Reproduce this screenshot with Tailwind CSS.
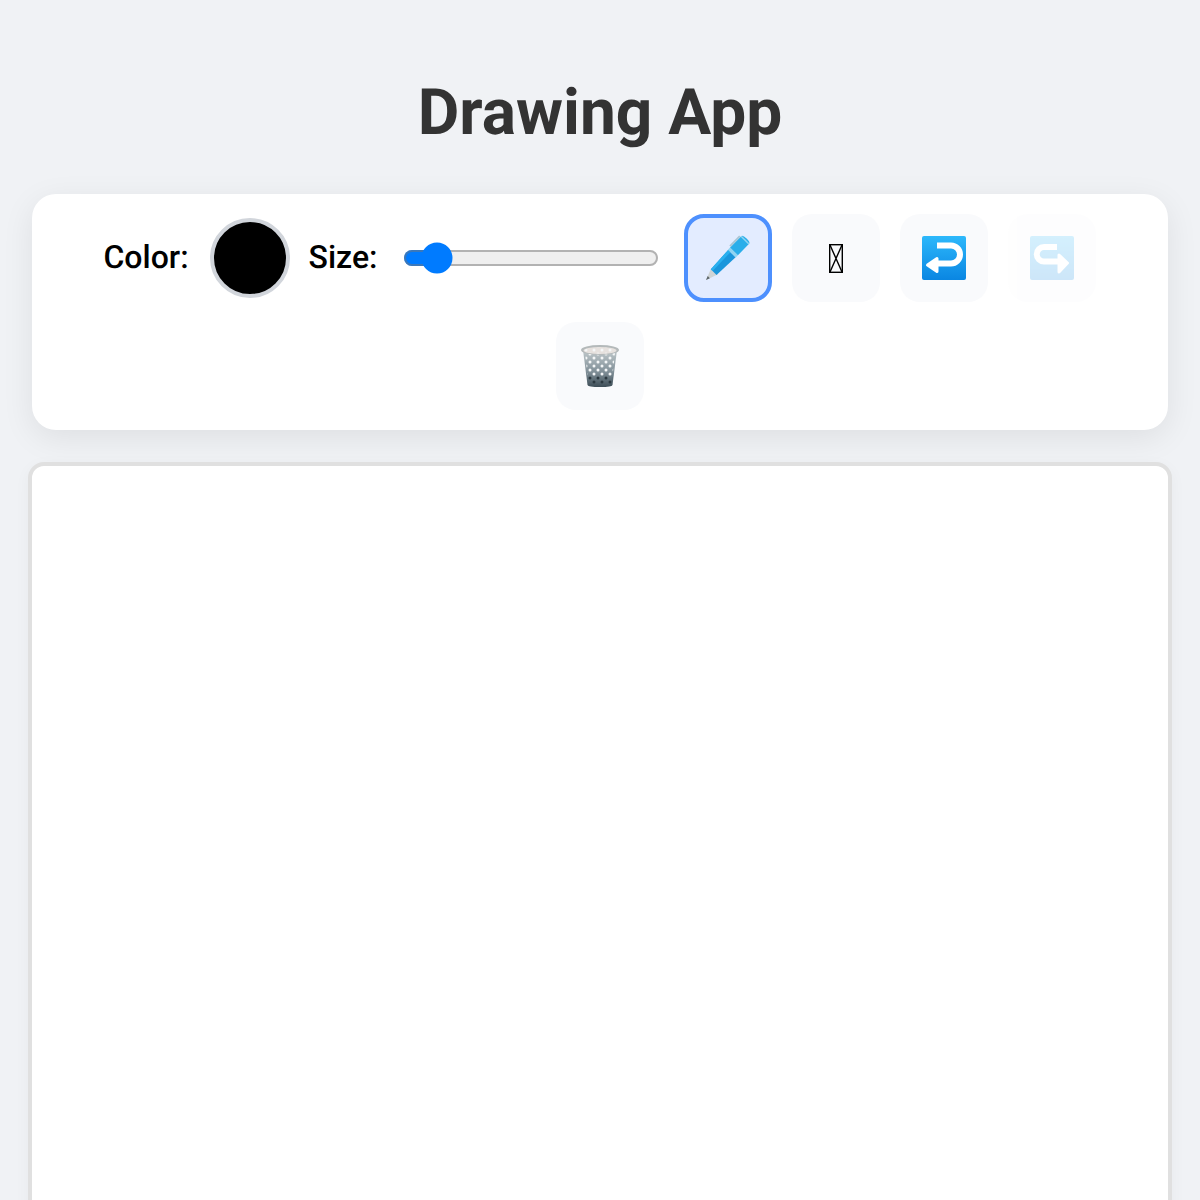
<!DOCTYPE html>
<html lang="en">
<head>
<meta charset="utf-8">
<title>Drawing App</title>
<script src="https://cdn.jsdelivr.net/npm/@tailwindcss/browser@4"></script>
</head>
<body class="bg-[#f0f2f5] font-['Roboto',sans-serif] [text-rendering:geometricPrecision]">
<div class="h-[1200px] overflow-hidden flex flex-col items-center pt-[75px] px-[32px]">
  <h1 class="text-[64px] leading-[75px] font-bold text-[#333] mb-[44px]">Drawing App</h1>
  <div class="w-[1136px] h-[236px] shrink-0 bg-white rounded-[24px] shadow-[0_8px_32px_rgba(0,0,0,0.08)] py-[20px] px-[40px] flex flex-wrap justify-center items-center content-start gap-[20px]">
    <label class="text-[32px] font-medium text-black -translate-x-px -translate-y-px">Color:</label>
    <div class="w-[80px] h-[80px] rounded-full bg-black border-[4px] border-[#d1d5db]"></div>
    <label class="text-[32px] font-medium text-black -translate-x-px -translate-y-px">Size:</label>
    <input type="range" min="1" max="50" value="5" aria-label="Size" class="[zoom:2] w-[128px] ml-[2px] mr-[2.5px] accent-[#007bff]">
    <button aria-label="Pen" class="w-[88px] h-[88px] rounded-[20px] bg-[#e3ecff] border-[4px] border-[#4d90fe] flex items-center justify-center">
      <svg width="48" height="48" viewBox="0 0 48 48">
        <g transform="translate(2 46) rotate(-45.6)">
          <path d="M0 0L12 -4.500V4.500Z" fill="#cfd4d6"/>
          <path d="M0 0L4 -1.500V1.500Z" fill="#5b6468"/>
          <path d="M11 -4L37 -5.200V5.200L11 4Z" fill="#1a96dc"/>
          <path d="M11 -4L37 -5.200V-2L11 -1.500Z" fill="#2ab0ef"/>
          <rect x="37" y="-5.500" width="3" height="11" fill="#8fd4f2"/>
          <path d="M40 -5.500H56Q58 -5.500 58 0Q58 5.500 56 5.500H40Z" fill="#2aaeea"/>
          <rect x="55" y="-5.500" width="1.500" height="11" fill="#8fd4f2"/>
          <path d="M41 -7.500H55V-5.500H41Z" fill="#a9c6d6"/>
        </g>
      </svg>
    </button>
    <button aria-label="Eraser" class="w-[88px] h-[88px] rounded-[20px] bg-[#f9fafc] flex items-center justify-center">
      <svg width="14" height="29" viewBox="0 0 14 29" fill="none" stroke="#000" stroke-width="1.400"><rect x="0.700" y="0.700" width="12.600" height="27.600"/><path d="M1 1L13 28M13 1L1 28"/></svg>
    </button>
    <button aria-label="Undo" class="w-[88px] h-[88px] rounded-[20px] bg-[#f9fafc] flex items-center justify-center">
      <svg width="44" height="44" viewBox="0 0 44 44">
        <defs><linearGradient id="u" x1="0" y1="0" x2="0" y2="1"><stop offset="0" stop-color="#2db8fb"/><stop offset="1" stop-color="#0a86e2"/></linearGradient></defs>
        <rect width="44" height="44" rx="2" fill="url(#u)"/>
        <path d="M15 9.500H29A9 9 0 0 1 29 27.500H14" fill="none" stroke="#fff" stroke-width="6"/>
        <path d="M5.500 29L15 22.500V35.500Z" fill="#fff" stroke="#fff" stroke-width="3" stroke-linejoin="round"/>
      </svg>
    </button>
    <button aria-label="Redo" disabled class="w-[88px] h-[88px] rounded-[20px] bg-[#f9fafc] flex items-center justify-center opacity-20">
      <svg width="44" height="44" viewBox="0 0 44 44">
        <defs><linearGradient id="r" x1="0" y1="0" x2="0" y2="1"><stop offset="0" stop-color="#2db8fb"/><stop offset="1" stop-color="#0a86e2"/></linearGradient></defs>
        <rect width="44" height="44" rx="2" fill="url(#r)"/>
        <path d="M27 11H14A7.250 7.250 0 0 0 14 25.500H30" fill="none" stroke="#fff" stroke-width="6"/>
        <path d="M37.500 27L29 19V36Z" fill="#fff" stroke="#fff" stroke-width="3" stroke-linejoin="round"/>
      </svg>
    </button>
    <button aria-label="Clear" class="w-[88px] h-[88px] rounded-[20px] bg-[#f9fafc] flex items-center justify-center">
      <svg width="40" height="44" viewBox="0 0 40 44">
        <defs>
          <linearGradient id="t" x1="0" y1="0" x2="0" y2="1"><stop offset="0" stop-color="#c2cacd"/><stop offset="0.6" stop-color="#7f8e96"/><stop offset="1" stop-color="#3d4d57"/></linearGradient>
          <pattern id="m" width="8" height="8" patternUnits="userSpaceOnUse"><circle cx="2" cy="2" r="1.500" fill="#f4f6f7"/><circle cx="6" cy="6" r="1.500" fill="#f4f6f7"/></pattern>
          <pattern id="d" width="8" height="8" patternUnits="userSpaceOnUse"><circle cx="2" cy="2" r="1.500" fill="#2b3840"/><circle cx="6" cy="6" r="1.500" fill="#2b3840"/></pattern>
        </defs>
        <path d="M3 6L7.500 41Q8 43 20 43Q32 43 32.500 41L37 6Z" fill="url(#t)"/>
        <path d="M5 9L7.500 32H32.500L35 9Z" fill="url(#m)"/>
        <path d="M7.500 32L8.500 40H31.500L32.500 32Z" fill="url(#d)"/>
        <ellipse cx="20" cy="6" rx="19" ry="5" fill="#b4b9ba"/>
        <ellipse cx="20" cy="6.500" rx="16.500" ry="3.500" fill="#e6e1de"/>
        <ellipse cx="20" cy="6.500" rx="16" ry="3" fill="url(#m)"/>
      </svg>
    </button>
  </div>
  <div class="mt-[32px] w-[1144px] h-[800px] shrink-0 bg-white rounded-[16px] border-[4px] border-[#e0e0e0] shadow-[0_4px_16px_rgba(0,0,0,0.04)]"></div>
</div>
</body>
</html>
